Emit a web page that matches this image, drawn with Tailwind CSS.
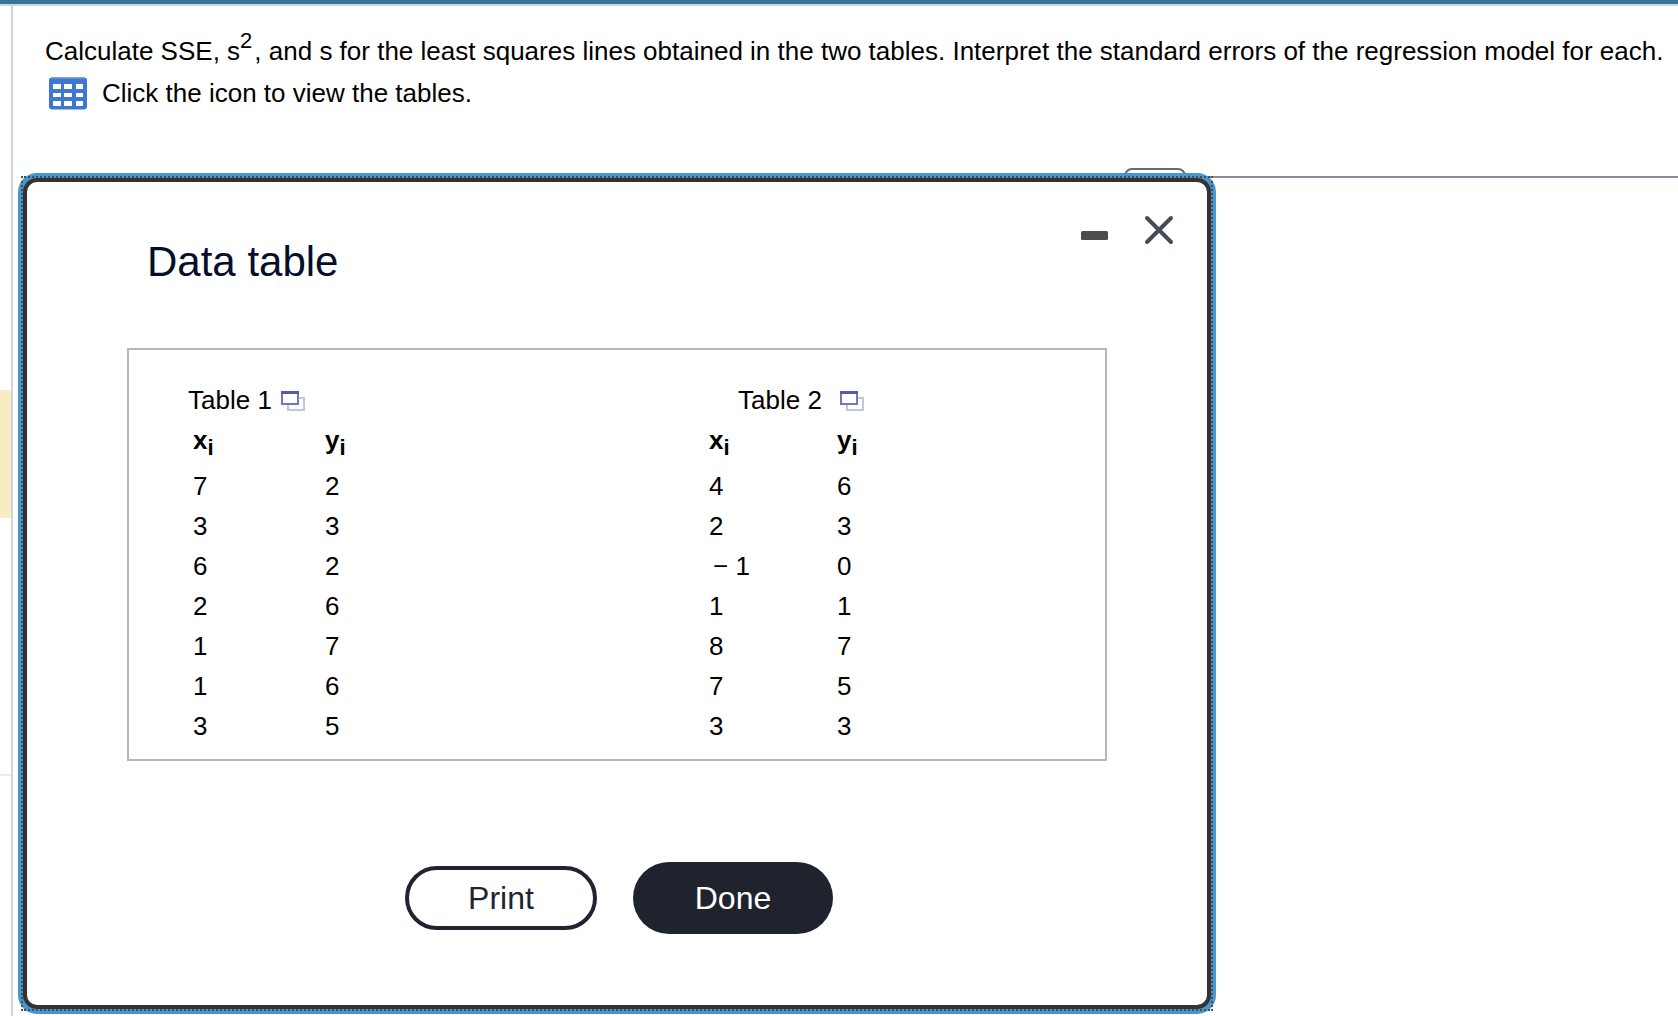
<!DOCTYPE html>
<html lang="en">
  <head>
    <meta charset="UTF-8" />
    <meta name="viewport" content="width=device-width, initial-scale=1.0" />
    <script src="https://cdn.jsdelivr.net/npm/@tailwindcss/browser@4"></script>
    <title>Data table</title>
  </head>
  <body
    class="flex flex-col h-screen overflow-hidden bg-white text-black text-[26px] leading-[40px] font-['Liberation_Sans',Arial,sans-serif]"
  >
    <header class="h-[6px] shrink-0 bg-[#337695] border-b-2 border-[#d0d2e2]"></header>

    <div class="flex grow">
      <!-- question list, only its edge shows -->
      <aside class="w-[13px] shrink-0 border-r-2 border-[#d0d2e2] pt-96">
        <div class="h-32 bg-[#f7ecc4]"></div>
        <div class="h-[258px] border-b-2 border-[#ebebeb]"></div>
      </aside>

      <main class="relative grow">
        <section class="pl-8 pt-[25px]">
          <p class="whitespace-nowrap h-[42px]">
            Calculate SSE, s<sup class="text-[22px] leading-none align-baseline relative -top-3 mr-[2px]">2</sup>, and s for the least squares lines obtained in the two tables. Interpret the standard errors of the regression model for each.
          </p>
          <div class="flex items-center">
            <button type="button" aria-label="View the tables" class="ml-1 mr-[15px]">
              <svg class="block" width="38" height="34" viewBox="0 0 38 34">
                <rect width="38" height="32" y="1.5" rx="3" fill="#3f76d2" />
                <path d="M2 2h34" stroke="#6b97e0" stroke-width="1.5" />
                <g fill="#fff">
                  <rect x="4" y="8" width="8" height="5" />
                  <rect x="15" y="8" width="8" height="5" />
                  <rect x="27" y="8" width="7" height="5" />
                  <rect x="4" y="17" width="8" height="4" />
                  <rect x="15" y="17" width="8" height="4" />
                  <rect x="27" y="17" width="7" height="4" />
                  <rect x="4" y="25" width="8" height="5" />
                  <rect x="15" y="25" width="8" height="5" />
                  <rect x="27" y="25" width="7" height="5" />
                </g>
              </svg>
            </button>
            <p>Click the icon to view the tables.</p>
          </div>
        </section>

        <!-- divider with its handle -->
        <div class="mt-[63px] ml-8 border-t-2 border-[#8a8ea3]">
          <button
            type="button"
            aria-label="Expand"
            class="absolute left-[1111px] top-[162px] w-[62px] h-7 rounded-lg border-2 border-[#5f6d7b] bg-white"
          ></button>
        </div>

        <!-- dialog -->
        <div
          class="absolute left-[10px] right-3 top-[172px] max-w-[1188px] outline-2 outline-dotted outline-[#4d4d4d]"
          role="dialog"
          aria-labelledby="dialogTitle"
        >
          <div
            class="rounded-[14px] border-4 border-[#333333] bg-white shadow-[0_0_0_5px_#4596d1] pb-[71px]"
          >
            <div class="flex justify-between pl-[120px] pr-[33px] pt-8">
              <h1 id="dialogTitle" class="text-[42px] leading-[48px] text-[#050f2b] pt-6">
                Data table
              </h1>
              <div class="flex gap-[35px] items-start">
                <button type="button" aria-label="Minimize">
                  <svg class="block" width="28" height="30" viewBox="0 0 28 30">
                    <rect x="0" y="17" width="27" height="9" rx="1.5" fill="#4d4d4d" />
                  </svg>
                </button>
                <button type="button" aria-label="Close">
                  <svg class="block" width="30" height="32" viewBox="0 0 30 32">
                    <path
                      d="M3 4L27 28M27 4L3 28"
                      stroke="#424c5a"
                      stroke-width="4"
                      stroke-linecap="round"
                    />
                  </svg>
                </button>
              </div>
            </div>

            <div class="mx-[100px] mt-[62px] border-2 border-[#b8b8b8] pt-[30px] pb-[13px] pl-[59px] flex">
              <table class="table-fixed w-[264px] mr-[252px] text-left">
                <caption class="text-left h-10">
                  <div class="flex items-center gap-2">
                    Table 1
                    <button type="button" aria-label="Copy Table 1">
                      <svg class="block" width="26" height="24" viewBox="0 0 26 24">
                        <rect x="8" y="10" width="16" height="12" fill="#fff" stroke="#c1c6e2" stroke-width="2" />
                        <rect x="2" y="4" width="16" height="12" fill="#fff" stroke="#6f7abb" stroke-width="2" />
                        <path d="M1 4.5h18" stroke="#515da8" stroke-width="3" />
                      </svg>
                    </button>
                  </div>
                </caption>
                <thead>
                  <tr class="h-[46px] align-top leading-[40px]">
                    <th class="w-[132px] pl-[5px]">x<sub class="text-[22px] leading-none align-baseline relative top-[6px]">i</sub></th>
                    <th class="pl-[5px]">y<sub class="text-[22px] leading-none align-baseline relative top-[6px]">i</sub></th>
                  </tr>
                </thead>
                <tbody>
                  <tr><td class="pl-[5px]">7</td><td class="pl-[5px]">2</td></tr>
                  <tr><td class="pl-[5px]">3</td><td class="pl-[5px]">3</td></tr>
                  <tr><td class="pl-[5px]">6</td><td class="pl-[5px]">2</td></tr>
                  <tr><td class="pl-[5px]">2</td><td class="pl-[5px]">6</td></tr>
                  <tr><td class="pl-[5px]">1</td><td class="pl-[5px]">7</td></tr>
                  <tr><td class="pl-[5px]">1</td><td class="pl-[5px]">6</td></tr>
                  <tr><td class="pl-[5px]">3</td><td class="pl-[5px]">5</td></tr>
                </tbody>
              </table>

              <table class="table-fixed w-[264px] text-left">
                <caption class="text-left h-10">
                  <div class="flex items-center gap-[17px] pl-[34px]">
                    Table 2
                    <button type="button" aria-label="Copy Table 2">
                      <svg class="block" width="26" height="24" viewBox="0 0 26 24">
                        <rect x="8" y="10" width="16" height="12" fill="#fff" stroke="#c1c6e2" stroke-width="2" />
                        <rect x="2" y="4" width="16" height="12" fill="#fff" stroke="#6f7abb" stroke-width="2" />
                        <path d="M1 4.5h18" stroke="#515da8" stroke-width="3" />
                      </svg>
                    </button>
                  </div>
                </caption>
                <thead>
                  <tr class="h-[46px] align-top leading-[40px]">
                    <th class="w-[128px] pl-[5px]">x<sub class="text-[22px] leading-none align-baseline relative top-[6px]">i</sub></th>
                    <th class="pl-[5px]">y<sub class="text-[22px] leading-none align-baseline relative top-[6px]">i</sub></th>
                  </tr>
                </thead>
                <tbody>
                  <tr><td class="pl-[5px]">4</td><td class="pl-[5px]">6</td></tr>
                  <tr><td class="pl-[5px]">2</td><td class="pl-[5px]">3</td></tr>
                  <tr><td class="pl-[9px]">− 1</td><td class="pl-[5px]">0</td></tr>
                  <tr><td class="pl-[5px]">1</td><td class="pl-[5px]">1</td></tr>
                  <tr><td class="pl-[5px]">8</td><td class="pl-[5px]">7</td></tr>
                  <tr><td class="pl-[5px]">7</td><td class="pl-[5px]">5</td></tr>
                  <tr><td class="pl-[5px]">3</td><td class="pl-[5px]">3</td></tr>
                </tbody>
              </table>
            </div>

            <div class="mt-[101px] pl-1 flex items-center justify-center gap-9 text-[32px]">
              <button
                type="button"
                class="w-48 h-16 rounded-full border-4 border-[#1f2430] text-[#1f2430]"
              >
                Print
              </button>
              <button type="button" class="w-[200px] h-[72px] rounded-full bg-[#1f232d] text-white">
                Done
              </button>
            </div>
          </div>
        </div>
      </main>
    </div>
  </body>
</html>
